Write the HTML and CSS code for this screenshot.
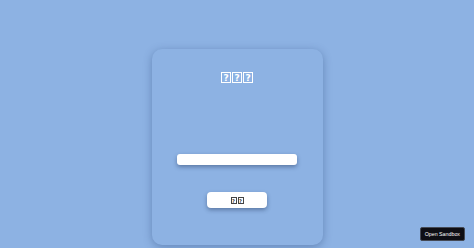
FILE: index.html
```html
<!DOCTYPE html>
<html>
<head>
<meta charset="utf-8">
<link rel="stylesheet" href="styles.css">
</head>
<body>
<div class="page">
  <div class="card">
    <h1 class="title"><span class="tofu">?</span><span class="tofu">?</span><span class="tofu">?</span></h1>
    <input class="field" type="text">
    <button class="btn"><span class="tofu tofu-sm">?</span><span class="tofu tofu-sm">?</span></button>
  </div>
</div>
<a class="sandbox">Open Sandbox</a>
</body>
</html>
```

FILE: styles.css
```css
html, body {
  margin: 0;
  padding: 0;
  height: 100%;
}
body {
  background: #8db2e3;
  font-family: "DejaVu Sans", sans-serif;
  overflow: hidden;
}
.page {
  display: flex;
  justify-content: center;
  padding-top: 49px;
}
.card {
  width: 171px;
  height: 196px;
  box-sizing: border-box;
  border-radius: 10px;
  background: #8db2e3;
  box-shadow: 0 2px 8px rgba(40, 70, 120, 0.4);
  display: flex;
  flex-direction: column;
  align-items: center;
}
.title {
  margin: 23px 0 0;
  display: flex;
  gap: 1px;
  font-size: 9px;
  line-height: 9px;
  font-weight: bold;
  color: #ffffff;
}
.tofu {
  display: inline-block;
  width: 8px;
  height: 9px;
  border: 1px solid #ffffff;
  text-align: center;
  line-height: 10px;
  font-weight: bold;
}
.tofu-sm {
  width: 4px;
  height: 5px;
  border: 1px solid #444444;
  font-size: 5px;
  line-height: 6px;
}
.field {
  margin-top: 71px;
  width: 120px;
  height: 11px;
  box-sizing: border-box;
  border: none;
  border-radius: 3px;
  background: #ffffff;
  box-shadow: 0 2px 4px rgba(30, 50, 90, 0.45);
  padding: 0;
  outline: none;
}
.btn {
  margin-top: 27px;
  width: 60px;
  height: 16px;
  border: none;
  border-radius: 4px;
  background: #ffffff;
  box-shadow: 0 2px 4px rgba(30, 50, 90, 0.45);
  font-family: "DejaVu Sans", sans-serif;
  color: #333333;
  padding: 0;
  display: flex;
  justify-content: center;
  align-items: center;
  gap: 1px;
}
.sandbox {
  position: absolute;
  right: 9px;
  bottom: 7px;
  background: #0e0e14;
  color: #ffffff;
  font-family: "Liberation Sans", sans-serif;
  font-size: 5.3px;
  line-height: 12px;
  padding: 0 4px;
  border-radius: 2px;
  border: 1px solid #454a55;
}
```
